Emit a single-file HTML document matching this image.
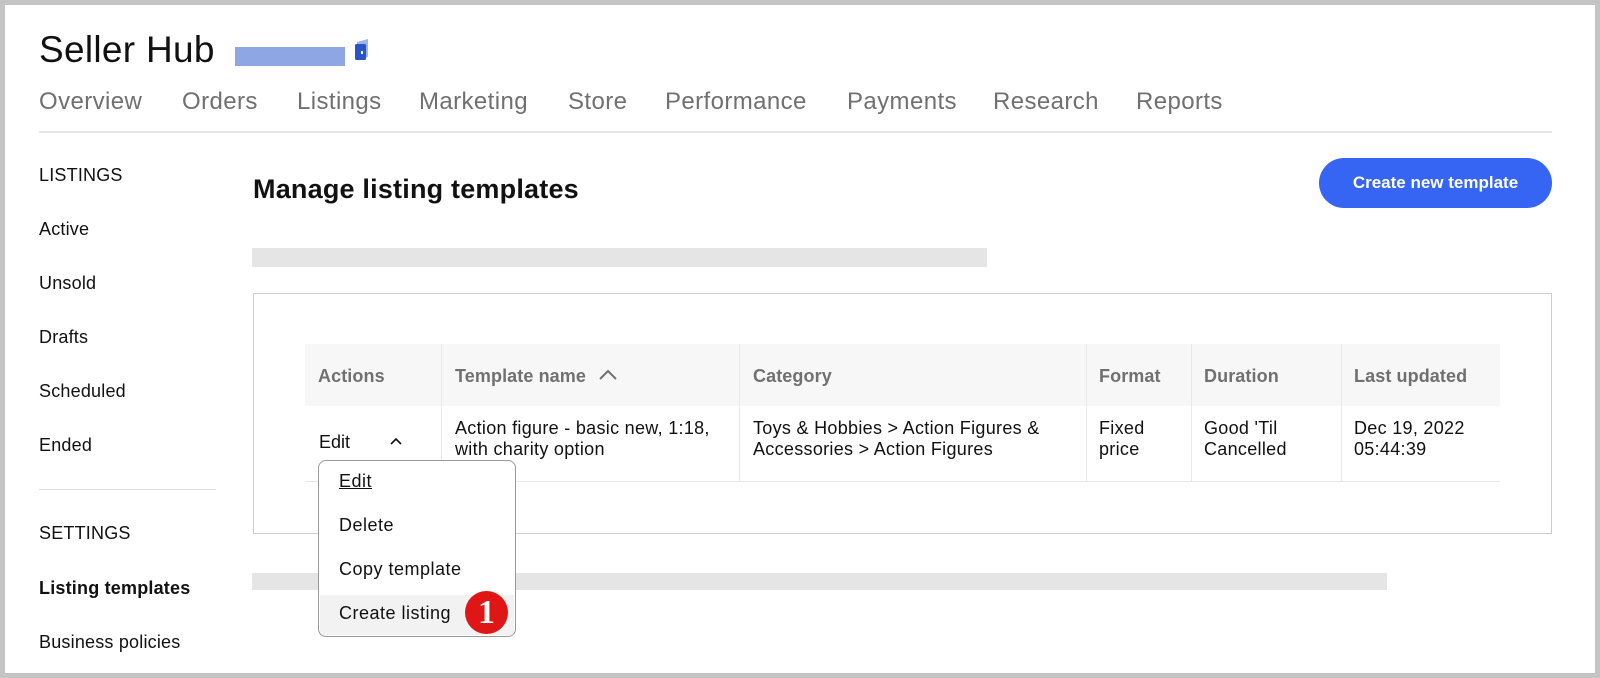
<!DOCTYPE html>
<html><head><meta charset="utf-8"><style>
*{margin:0;padding:0;box-sizing:border-box}
body{width:1600px;height:678px;background:#c4c4c4;font-family:"Liberation Sans",Arial,sans-serif;color:#111;position:relative;overflow:hidden}
.page{position:absolute;left:5px;top:5px;width:1590px;height:668px;background:#fff}
.a{position:absolute;white-space:nowrap}
.nav{font-size:24px;letter-spacing:0.4px;color:#707070;top:88px}
.side{font-size:18px;left:39px;color:#111;letter-spacing:0.2px}
.th{font-size:18px;color:#707070;font-weight:bold;top:366px;letter-spacing:0.1px}
.td{font-size:18px;line-height:21px;top:418px;color:#111;letter-spacing:0.3px}
.vl{position:absolute;top:344px;height:138px;width:1px;background:#e8e8e8}
.mi{font-size:18px;left:339px;letter-spacing:0.5px}
</style></head><body>
<div class="page"></div>
<div class="a" style="left:39px;top:29px;font-size:37px;color:#111;letter-spacing:0.3px">Seller Hub</div>
<div class="a" style="left:235px;top:47px;width:110px;height:19px;background:#8ea6e3"></div>
<svg class="a" style="left:353px;top:38px" width="17" height="24" viewBox="0 0 17 24"><path d="M4 4 L15 1 L15 19 L4 22 Z" fill="#9fb4ea"/><rect x="2" y="6" width="11" height="16" rx="1.5" fill="#2a52c9"/><rect x="8" y="13" width="2" height="3" fill="#fff"/></svg>
<div class="a nav" style="left:39px">Overview</div>
<div class="a nav" style="left:182px">Orders</div>
<div class="a nav" style="left:297px">Listings</div>
<div class="a nav" style="left:419px">Marketing</div>
<div class="a nav" style="left:568px">Store</div>
<div class="a nav" style="left:665px">Performance</div>
<div class="a nav" style="left:847px">Payments</div>
<div class="a nav" style="left:993px">Research</div>
<div class="a nav" style="left:1136px">Reports</div>
<div class="a" style="left:39px;top:131px;width:1513px;height:2px;background:#e5e5e5"></div>

<div class="a side" style="top:165px">LISTINGS</div>
<div class="a side" style="top:219px">Active</div>
<div class="a side" style="top:273px">Unsold</div>
<div class="a side" style="top:327px">Drafts</div>
<div class="a side" style="top:381px">Scheduled</div>
<div class="a side" style="top:435px">Ended</div>
<div class="a" style="left:39px;top:489px;width:177px;height:1px;background:#ddd"></div>
<div class="a side" style="top:523px">SETTINGS</div>
<div class="a side" style="top:578px;font-weight:bold">Listing templates</div>
<div class="a side" style="top:632px">Business policies</div>

<div class="a" style="left:253px;top:174px;font-size:27px;font-weight:bold;letter-spacing:0.2px">Manage listing templates</div>
<div class="a" style="left:1319px;top:158px;width:233px;height:50px;border-radius:25px;background:#3665f3;color:#fff;font-size:17px;font-weight:bold;text-align:center;line-height:50px">Create new template</div>
<div class="a" style="left:252px;top:248px;width:735px;height:19px;background:#e5e5e5"></div>
<div class="a" style="left:253px;top:293px;width:1299px;height:241px;border:1px solid #ccc"></div>
<div class="a" style="left:305px;top:344px;width:1195px;height:62px;background:#f7f7f7"></div>
<div class="a" style="left:305px;top:481px;width:1195px;height:1px;background:#e8e8e8"></div>
<div class="vl" style="left:441px"></div><div class="vl" style="left:739px"></div><div class="vl" style="left:1086px"></div><div class="vl" style="left:1191px"></div><div class="vl" style="left:1341px"></div>
<div class="a th" style="left:318px">Actions</div>
<div class="a th" style="left:455px">Template name</div>
<svg class="a" style="left:598px;top:368px" width="20" height="14"><path d="M2 11 L10 3 L18 11" fill="none" stroke="#707070" stroke-width="2"/></svg>
<div class="a th" style="left:753px">Category</div>
<div class="a th" style="left:1099px">Format</div>
<div class="a th" style="left:1204px">Duration</div>
<div class="a th" style="left:1354px">Last updated</div>
<div class="a" style="left:319px;top:432px;font-size:18px">Edit</div>
<svg class="a" style="left:390px;top:437px" width="12" height="9"><path d="M1 7 L6 2 L11 7" fill="none" stroke="#111" stroke-width="1.6"/></svg>
<div class="a td" style="left:455px">Action figure - basic new, 1:18,<br>with charity option</div>
<div class="a td" style="left:753px">Toys &amp; Hobbies &gt; Action Figures &amp;<br>Accessories &gt; Action Figures</div>
<div class="a td" style="left:1099px">Fixed<br>price</div>
<div class="a td" style="left:1204px">Good 'Til<br>Cancelled</div>
<div class="a td" style="left:1354px">Dec 19, 2022<br>05:44:39</div>

<div class="a" style="left:252px;top:573px;width:1135px;height:17px;background:#e5e5e5"></div>
<div class="a" style="left:318px;top:460px;width:198px;height:177px;border:1px solid #999;border-radius:8px;background:#fff;overflow:hidden">
<div style="position:absolute;left:1px;right:1px;top:134px;height:40px;background:#f2f2f2"></div>
</div>
<div class="a mi" style="top:471px;text-decoration:underline">Edit</div>
<div class="a mi" style="top:515px">Delete</div>
<div class="a mi" style="top:559px">Copy template</div>
<div class="a mi" style="top:603px">Create listing</div>
<div class="a" style="left:465px;top:591px;width:43px;height:43px;border-radius:50%;background:#e01515;color:#fff;font-family:'Liberation Serif',serif;font-weight:bold;font-size:34px;text-align:center;line-height:43px">1</div>
</body></html>
